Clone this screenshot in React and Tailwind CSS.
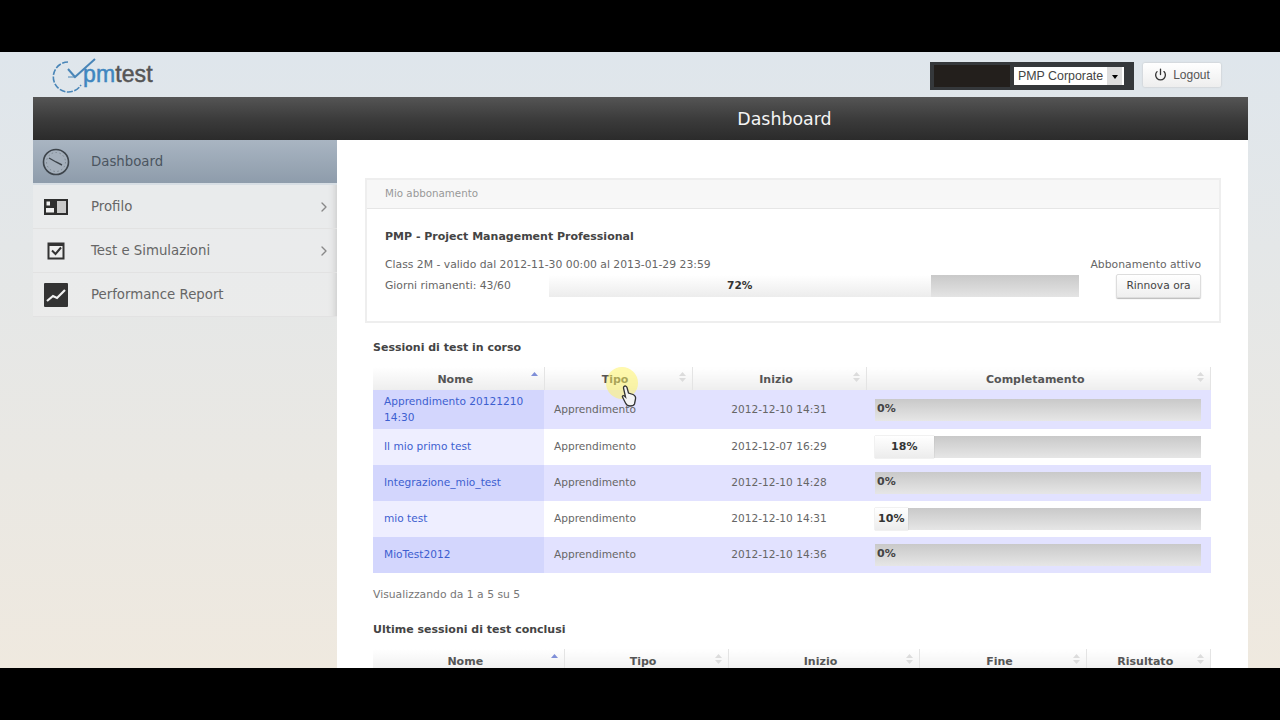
import { Power, ChevronRight } from "lucide-react";

const sessions = [
  { name: "Apprendimento 20121210 14:30", start: "2012-12-10 14:31", pct: 0, h: "h-[39px]" },
  { name: "Il mio primo test", start: "2012-12-07 16:29", pct: 18, h: "h-9" },
  { name: "Integrazione_mio_test", start: "2012-12-10 14:28", pct: 0, h: "h-9" },
  { name: "mio test", start: "2012-12-10 14:31", pct: 10, h: "h-9" },
  { name: "MioTest2012", start: "2012-12-10 14:36", pct: 0, h: "h-9" },
];

function SortIcon({ active }) {
  return (
    <svg width="7" height="10" viewBox="0 0 7 10" className="absolute right-[6px] top-[5px]">
      <path d="M3.5 0 L7 4 H0 Z" fill={active ? "#7f8fd8" : "#dcdcdc"} />
      {!active && <path d="M3.5 10 L7 6 H0 Z" fill="#dcdcdc" />}
    </svg>
  );
}

function Th({ children, active, className }) {
  return (
    <th className={`relative h-[23px] pt-[3px] pr-[6px] text-center text-[11px] leading-4 font-bold text-[#555] border-r border-[#e4e4e4] bg-gradient-to-b from-white to-[#eeeeee] ${className}`}>
      {children}
      <SortIcon active={active} />
    </th>
  );
}

function Bar({ pct }) {
  return (
    <div className="relative h-[22px] w-full bg-gradient-to-b from-[#c9c9c9] to-[#e6e6e6]">
      {pct > 0 && (
        <div
          className="h-full bg-gradient-to-b from-white to-[#ececec] shadow-[0_0_1px_#aaa] text-center text-[11px] leading-[22px] font-bold text-[#333]"
          style={{ width: `${pct}%` }}
        >
          {pct}%
        </div>
      )}
      {pct === 0 && <span className="absolute left-[2px] top-0 text-[11px] leading-[20px] font-bold text-[#444]">0%</span>}
    </div>
  );
}

function MenuIcon({ type }) {
  if (type === "clock")
    return (
      <svg width="28" height="28" viewBox="0 0 28 28">
        <circle cx="14" cy="14" r="12.5" fill="#a4afbb" stroke="#3d444b" strokeWidth="1.6" />
        <circle cx="14" cy="14" r="9.5" fill="none" stroke="#7d8790" strokeWidth="1" strokeDasharray="1.5 2.5" />
        <path d="M7 10 L14 14 L20 17" stroke="#3d444b" strokeWidth="1.4" fill="none" />
      </svg>
    );
  if (type === "card")
    return (
      <svg width="24" height="16" viewBox="0 0 24 16">
        <rect width="24" height="16" fill="#2e2e2e" />
        <rect x="2.5" y="2.5" width="3.5" height="4" fill="#f0f0f0" />
        <rect x="2" y="9" width="8" height="4.5" fill="#f0f0f0" />
        <rect x="13" y="2" width="9" height="12" fill="#c9c9c9" />
      </svg>
    );
  if (type === "check")
    return (
      <svg width="18" height="18" viewBox="0 0 18 18">
        <rect x="1.5" y="1.5" width="15" height="15" fill="#eeeeee" stroke="#333" strokeWidth="2" />
        <rect x="1" y="1" width="16" height="3" fill="#333" />
        <path d="M5 8.5 L8.5 12 L14 5.5" stroke="#333" strokeWidth="2" fill="none" />
      </svg>
    );
  return (
    <svg width="24" height="24" viewBox="0 0 24 24">
      <rect width="24" height="24" rx="1" fill="#333" />
      <path d="M3 18 L9 13 L13 15 L21 7" stroke="#f2f2f2" strokeWidth="2.2" fill="none" />
    </svg>
  );
}

function MenuItem({ icon, label, arrow }) {
  return (
    <div className="flex h-[44px] items-center border-b border-[#e2e2e2]">
      <div className="flex w-[46px] justify-center">
        <MenuIcon type={icon} />
      </div>
      <span className="ml-3 text-[13.3px] text-[#666]">{label}</span>
      {arrow && <ChevronRight className="ml-auto mr-[5px] text-[#888]" size={16} strokeWidth={2} />}
    </div>
  );
}

export default function App() {
  return (
    <div className="flex h-[720px] w-[1280px] flex-col overflow-hidden bg-black font-['DejaVu_Sans',sans-serif]">
      <div className="mt-[52px] h-[616px] overflow-hidden bg-gradient-to-b from-[#dfe6ec] to-[#efe9df] relative">
        {/* top bar */}
        <div className="flex h-[45px] items-center pl-[50px] pr-[59px]">
          <div className="flex items-center">
            <svg width="46" height="36" viewBox="0 0 46 36" className="mt-[2px]">
              <path d="M18 4 A15 15 0 1 0 31 27" fill="none" stroke="#4a86b8" strokeWidth="1.6" strokeDasharray="6 1.5" />
              <path d="M18 11 L25 19 L45 1" fill="none" stroke="#4a86b8" strokeWidth="2" />
              <path d="M18 19 L25 19" stroke="#4a86b8" strokeWidth="1" />
            </svg>
            <span className="-ml-[13px] font-['Liberation_Sans',sans-serif] text-[23px] tracking-[0.1px] [-webkit-text-stroke:0.5px]">
              <span className="text-[#3f86c0]">pm</span>
              <span className="text-[#555]">test</span>
            </span>
          </div>
          <div className="ml-auto mt-[3px] flex h-7 w-[204px] items-center bg-[#35383b] pl-1">
            <div className="h-[22px] w-[76px] bg-[#231f1c]" />
            <div className="ml-1 flex h-[18px] w-[110px] items-center bg-white">
              <span className="pl-1 font-['Liberation_Sans',sans-serif] text-[12.4px] text-[#444]">PMP Corporate</span>
              <span className="ml-auto mr-[2px] flex h-[18px] w-[15px] items-center justify-center bg-[#ddd]">
                <span className="mt-[2px] border-x-[3px] border-t-[4px] border-x-transparent border-t-black" />
              </span>
            </div>
          </div>
          <button className="ml-[9px] flex h-6 w-[78px] items-center justify-center gap-[6px] rounded-[2px] bg-gradient-to-b from-white to-[#eeeeee] font-['Liberation_Sans',sans-serif] text-[12px] text-[#555] shadow-[0_0_2px_#bbb]">
            <Power size={13} strokeWidth={2.4} className="text-[#333]" />
            Logout
          </button>
        </div>

        {/* title bar */}
        <div className="mx-[33px] flex h-[43px] w-[1215px] items-center bg-gradient-to-b from-[#555] via-[#3c3c3c] to-[#2b2b2b] pl-[296px] pt-[2px]">
          <h1 className="w-[911px] text-center text-[17.4px] text-[#f4f4f4]">Dashboard</h1>
        </div>

        <div className="mx-[33px] flex w-[1215px]">
          {/* sidebar */}
          <aside className="w-[304px] shrink-0 self-start bg-[#efefef]/50 shadow-[inset_-8px_0_6px_-6px_#ccc]">
            <div className="flex h-[45px] items-center bg-gradient-to-b from-[#a9b5c2] to-[#8e9cab] border-b-2 border-[#d7dee4]">
              <div className="flex w-[46px] justify-center">
                <MenuIcon type="clock" />
              </div>
              <span className="ml-3 text-[13.3px] text-[#4b5560]">Dashboard</span>
            </div>
            <MenuItem icon="card" label="Profilo" arrow />
            <MenuItem icon="check" label="Test e Simulazioni" arrow />
            <MenuItem icon="chart" label="Performance Report" />
          </aside>

          {/* main */}
          <main className="h-[528px] flex-1 overflow-hidden bg-white pl-7 pr-7 pt-[38px]">
            <section className="h-[145px] w-[856px] border-2 border-[#eeeeee]">
              <div className="flex h-[29px] items-center border-b border-[#e6e6e6] bg-[#f7f7f7] pl-[18px] text-[10.3px] text-[#999]">
                Mio abbonamento
              </div>
              <div className="pl-[18px] pr-[18px]">
                <h3 className="pt-[21px] text-[11px] leading-[14px] font-bold text-[#444]">PMP - Project Management Professional</h3>
                <div className="mt-[14px] flex justify-between text-[10.8px] leading-[14px] text-[#666]">
                  <span>Class 2M - valido dal 2012-11-30 00:00 al 2013-01-29 23:59</span>
                  <span>Abbonamento attivo</span>
                </div>
                <div className="mt-[2px] flex items-center">
                  <span className="w-[164px] text-[10.8px] text-[#666]">Giorni rimanenti: 43/60</span>
                  <div className="h-[22px] w-[530px] bg-gradient-to-b from-[#c9c9c9] to-[#e4e4e4]">
                    <div className="h-full w-[72%] bg-gradient-to-b from-white to-[#ececec] text-center text-[10.6px] leading-5 font-bold text-[#333]">
                      72%
                    </div>
                  </div>
                  <button className="ml-auto h-6 w-[85px] rounded-[2px] border border-[#ddd] bg-gradient-to-b from-white to-[#efefef] text-[10.7px] text-[#444] shadow-[0_1px_1px_#bbb]">
                    Rinnova ora
                  </button>
                </div>
              </div>
            </section>

            <h2 className="ml-[8px] mt-[17px] text-[11px] leading-[16px] font-bold text-[#444]">Sessioni di test in corso</h2>

            <table className="relative mt-[11px] ml-[8px] w-[838px] table-fixed border-collapse">
              <thead>
                <tr>
                  <Th active className="w-[171px]">Nome</Th>
                  <Th className="w-[148px]">Tipo</Th>
                  <Th className="w-[174px]">Inizio</Th>
                  <Th>Completamento</Th>
                </tr>
              </thead>
              <tbody>
                {sessions.map((s, i) => {
                  const odd = i % 2 === 0;
                  return (
                    <tr key={s.name} className={`${s.h} ${odd ? "bg-[#e2e2ff]" : "bg-white"}`}>
                      <td className={`pl-[11px] pr-[10px] pb-[2px] text-[10.6px] leading-[16px] text-[#3d5fd0] ${odd ? "bg-[#d3d6fd]" : "bg-[#eeeeff]"}`}>{s.name}</td>
                      <td className="pl-[10px] text-[10.6px] text-[#666]">Apprendimento</td>
                      <td className="text-center text-[10.6px] text-[#666]">{s.start}</td>
                      <td className="pl-[9px] pr-[10px]">
                        <Bar pct={s.pct} />
                      </td>
                    </tr>
                  );
                })}
              </tbody>
            </table>

            <p className="ml-[8px] mt-[15px] text-[10.8px] leading-[14px] text-[#777]">Visualizzando da 1 a 5 su 5</p>
            <h2 className="ml-[8px] mt-[20px] text-[11px] leading-[16px] font-bold text-[#444]">Ultime sessioni di test conclusi</h2>

            <table className="mt-[11px] ml-[8px] w-[838px] table-fixed border-collapse">
              <thead>
                <tr>
                  <Th active className="w-[191px]">Nome</Th>
                  <Th className="w-[164px]">Tipo</Th>
                  <Th className="w-[191px]">Inizio</Th>
                  <Th className="w-[167px]">Fine</Th>
                  <Th>Risultato</Th>
                </tr>
              </thead>
            </table>
          </main>
        </div>

        {/* mouse pointer from the recording */}
        <div className="absolute left-[606px] top-[315px] h-8 w-8 rounded-full bg-[#fff45c]/50" />
        <svg width="16" height="22" viewBox="0 0 16 22" className="absolute left-[621px] top-[333px]">
          <path
            d="M3 1.5 C4 0.5 5.5 1 6 2.5 L7.5 8 L12 9.5 C14 10.5 15 12 14.5 14 L13.5 19 C13 20.5 11 21 9 21 C7 21 5.5 20 4.5 18 L1.5 12 C1 11 2 10 3.5 11 L4.5 12 L2.5 3 C2.4 2.5 2.6 2 3 1.5 Z"
            fill="#f4f4f4"
            stroke="#333"
            strokeWidth="1.3"
          />
        </svg>
      </div>
    </div>
  );
}
